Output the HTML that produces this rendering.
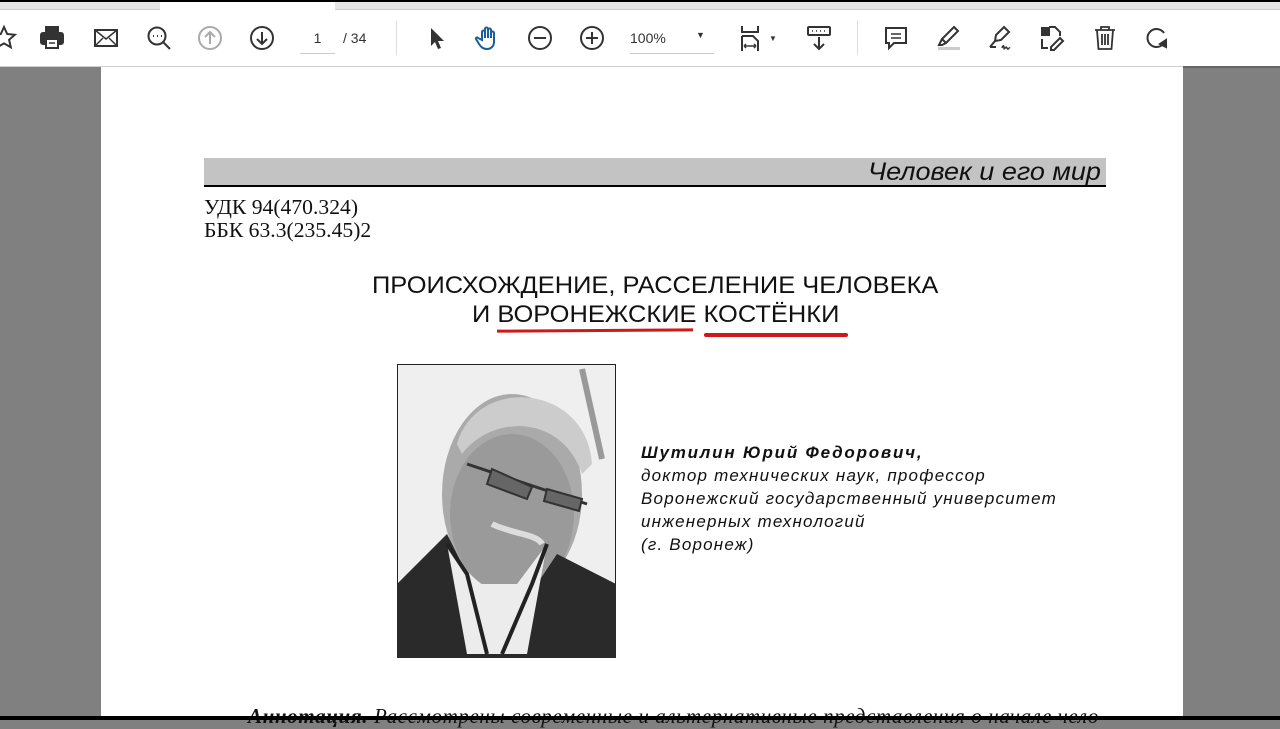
<!DOCTYPE html>
<html><head><meta charset="utf-8"><style>
*{margin:0;padding:0;box-sizing:border-box}
body{width:1280px;height:720px;overflow:hidden;background:#808080;font-family:"Liberation Sans",sans-serif;position:relative}
.abs{position:absolute}
#top{left:0;top:0;width:1280px;height:67px;background:#fff;border-bottom:1px solid #cfcfcf}
.tab{top:0;height:10px;background:#e6e6e6;border-bottom:1px solid #ccc}
#page{left:101px;top:67px;width:1082px;height:653px;background:#fff}
svg.i{position:absolute;top:24px;width:28px;height:28px;fill:none;stroke:#333;stroke-width:2}
.narrow{transform-origin:left top;display:inline-block;white-space:nowrap}
</style></head><body>
<div id="top" class="abs">
 <div class="abs tab" style="left:0;width:160px"></div>
 <div class="abs tab" style="left:335px;width:945px"></div>
 <div class="abs" style="left:0;top:0;width:1280px;height:2px;background:#000"></div>
 <svg class="i" style="left:-10px" viewBox="0 0 28 28"><path d="M14 3l3.2 7 7.6.8-5.7 5 1.7 7.5L14 19.4 7.2 23.3l1.7-7.5-5.7-5 7.6-.8z"/></svg>
 <svg class="i" style="left:38px" viewBox="0 0 28 28"><rect x="8" y="3" width="12" height="6" fill="#333"/><rect x="3" y="9" width="22" height="11" rx="2" fill="#333"/><rect x="8" y="15" width="12" height="9" fill="#fff"/><path d="M11 19h6" stroke-width="1.5"/></svg>
 <svg class="i" style="left:92px" viewBox="0 0 28 28"><rect x="3" y="6" width="22" height="16"/><path d="M3 6l11 9 11-9M3 22l8-8M25 22l-8-8" stroke-width="1.5"/></svg>
 <svg class="i" style="left:145px" viewBox="0 0 28 28"><circle cx="12" cy="12" r="8.5"/><path d="M18 18l7 7"/><path d="M8 12h1M12 12h1M16 12h1" stroke-width="2"/></svg>
 <svg class="i" style="left:196px;stroke:#aaa" viewBox="0 0 28 28"><circle cx="14" cy="14" r="11"/><path d="M14 20V8M9 13l5-5 5 5"/></svg>
 <svg class="i" style="left:248px" viewBox="0 0 28 28"><circle cx="14" cy="14" r="11"/><path d="M14 8v12M9 15l5 5 5-5"/></svg>
 <div class="abs" style="left:300px;top:30px;width:35px;font-size:14px;color:#333;text-align:center;border-bottom:1px solid #ccc;height:24px">1</div>
 <div class="abs" style="left:343px;top:30px;font-size:14px;color:#333">/ 34</div>
 <div class="abs" style="left:396px;top:21px;width:1px;height:34px;background:#ddd"></div>
 <svg class="i" style="left:422px" viewBox="0 0 28 28"><path d="M9 4v18l4-4 3 7 3-1-3-7h6z" fill="#333" stroke="none"/></svg>
 <svg class="i" style="left:474px;stroke:#1a5e9a" viewBox="0 0 28 28"><path d="M8 16V8a1.5 1.5 0 013 0v6V5a1.5 1.5 0 013 0v9V6a1.5 1.5 0 013 0v8V9a1.5 1.5 0 013 0v9c0 4-3 7-7 7s-6-2-8-5l-3-5c-.6-1 1-2.2 2-1z"/></svg>
 <svg class="i" style="left:526px" viewBox="0 0 28 28"><circle cx="14" cy="14" r="11"/><path d="M8 14h12"/></svg>
 <svg class="i" style="left:578px" viewBox="0 0 28 28"><circle cx="14" cy="14" r="11"/><path d="M8 14h12M14 8v12"/></svg>
 <div class="abs" style="left:630px;top:30px;width:84px;height:24px;font-size:14px;color:#333;border-bottom:1px solid #ccc">100%<span style="position:absolute;left:66px;top:0;font-size:9px">▼</span></div>
 <svg class="i" style="left:738px" viewBox="0 0 28 28"><path d="M4 2v6h16V2"/><path d="M4 12h11l5 5v10M4 12v15" /><path d="M6 22h12M6 22l2-2M6 22l2 2M18 22l-2-2M18 22l-2 2" stroke-width="1.5"/></svg>
 <div class="abs" style="left:769px;top:34px;font-size:8px;color:#333">▼</div>
 <svg class="i" style="left:805px" viewBox="0 0 28 28"><rect x="3" y="3" width="22" height="8" rx="1"/><path d="M7 7h1M11 7h1M15 7h1M19 7h1" stroke-width="1.5"/><path d="M14 13v12M9 20l5 5 5-5"/></svg>
 <div class="abs" style="left:857px;top:21px;width:1px;height:34px;background:#ddd"></div>
 <svg class="i" style="left:882px" viewBox="0 0 28 28"><path d="M4 4h20v15H12l-5 5v-5H4z"/><path d="M9 10h10M9 14h10" stroke-width="1.5"/></svg>
 <svg class="i" style="left:934px" viewBox="0 0 28 28"><path d="M20 3l4 4-12 12-4-4z"/><path d="M8 15l-3 6 3 0 4-2"/><rect x="4" y="23" width="22" height="3" fill="#ccc" stroke="none"/></svg>
 <svg class="i" style="left:986px" viewBox="0 0 28 28"><path d="M18 3l5 5-8 8-6 1 1-6z"/><path d="M9 17l-5 6M4 23h6"/><path d="M16 24c1-3 2-3 2 0s2-3 3 0 2-1 3 0" stroke-width="1.5"/></svg>
 <svg class="i" style="left:1038px" viewBox="0 0 28 28"><rect x="4" y="4" width="7" height="7" fill="#333"/><path d="M11 3h6l5 5v4M4 15v9h6"/><path d="M22 14l3 3-9 9h-3v-3z"/></svg>
 <svg class="i" style="left:1091px" viewBox="0 0 28 28"><path d="M4 6h20M10 6V3h8v3M6 6l1.5 19h13L22 6M11 10v11M14 10v11M17 10v11" stroke-width="1.8"/></svg>
 <svg class="i" style="left:1143px" viewBox="0 0 28 28"><path d="M21 19A9 9 0 1 1 21 9"/><path d="M17 20l6 3-0-7z" fill="#333"/></svg>
 <div class="abs" style="left:1183px;top:66px;width:97px;height:2px;background:#666"></div>
</div>
<div id="page" class="abs"></div>
<div class="abs" style="left:204px;top:158px;width:902px;height:29px;background:#c4c3c4;border-bottom:2px solid #000"></div>
<div class="abs" style="left:868px;top:158px;font-size:25px;font-style:italic;color:#111"><span class="narrow" style="transform:scaleX(1.08)">Человек и его мир</span></div>
<div class="abs" style="left:204px;top:196px;font-family:'Liberation Serif',serif;font-size:21px;line-height:23px;color:#111"><span class="narrow" style="transform:scaleX(1.03)">УДК 94(470.324)<br>ББК 63.3(235.45)2</span></div>
<div class="abs" style="left:372px;top:271px;font-size:24px;line-height:29px;color:#111"><span class="narrow" style="transform:scaleX(1.06)">ПРОИСХОЖДЕНИЕ, РАССЕЛЕНИЕ ЧЕЛОВЕКА</span></div>
<div class="abs" style="left:472px;top:300px;font-size:24px;line-height:29px;color:#111"><span class="narrow" style="transform:scaleX(1.06)">И ВОРОНЕЖСКИЕ КОСТЁНКИ</span></div>
<div class="abs" style="left:497px;top:329px;width:196px;height:3px;background:#d01818;transform:rotate(-.4deg)"></div>
<div class="abs" style="left:704px;top:333px;width:144px;height:4px;background:#d01818;border-radius:2px"></div>
<svg class="abs" style="left:397px;top:364px" width="219" height="294" viewBox="0 0 219 294">
 <rect x="0.5" y="0.5" width="218" height="293" fill="#efefef" stroke="#222"/>
 <path d="M185 5l20 90" stroke="#999" stroke-width="6"/>
 <ellipse cx="115" cy="130" rx="70" ry="100" fill="#aaa"/>
 <path d="M60 80c20-70 130-60 135 20l-10 10c-20-60-90-60-120-20z" fill="#ccc"/>
 <ellipse cx="115" cy="150" rx="62" ry="80" fill="#9a9a9a"/>
 <path d="M70 100l120 40" stroke="#333" stroke-width="3"/>
 <path d="M95 105l40 18-5 12-40-15zM150 125l35 10-3 12-35-10z" fill="#666" stroke="#333" stroke-width="2"/>
 <path d="M95 160c20 10 45 10 50 20" stroke="#ddd" stroke-width="6" fill="none"/>
 <path d="M0 220l50-50 30 60 40 20 40-60 59 30v74H0z" fill="#2a2a2a"/>
 <path d="M50 180l20 110h60l20-110-30 40-40 0z" fill="#ececec"/>
 <path d="M50 180l20 30 20 80M150 180l-15 40-30 70" stroke="#222" stroke-width="4" fill="none"/>
</svg>
<div class="abs" style="left:641px;top:441px;font-size:17px;line-height:23px;font-style:italic;color:#111;letter-spacing:1.2px;white-space:nowrap">
 <div style="font-weight:bold;letter-spacing:1.8px">Шутилин Юрий Федорович,</div>
 <div>доктор технических наук, профессор</div>
 <div>Воронежский государственный университет</div>
 <div>инженерных технологий</div>
 <div>(г. Воронеж)</div>
</div>
<div class="abs" style="left:248px;top:704px;font-family:'Liberation Serif',serif;font-style:italic;font-size:21px;color:#111;white-space:nowrap;letter-spacing:.6px"><b>Аннотация.</b> Рассмотрены современные и альтернативные представления о начале чело-</div>
<div class="abs" style="left:0;top:716px;width:1280px;height:4px;background:#000"></div>
</body></html>
